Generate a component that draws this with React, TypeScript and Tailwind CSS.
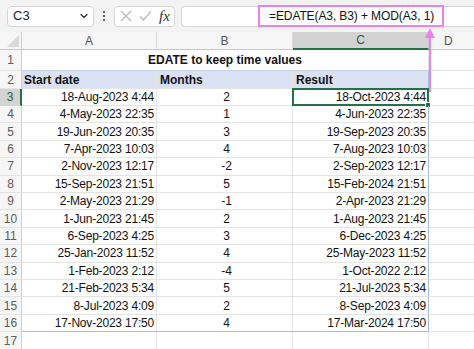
import { ChevronDown } from "lucide-react";

const rows = [
  ["18-Aug-2023 4:44", "2", "18-Oct-2023 4:44"],
  ["4-May-2023 22:35", "1", "4-Jun-2023 22:35"],
  ["19-Jun-2023 20:35", "3", "19-Sep-2023 20:35"],
  ["7-Apr-2023 10:03", "4", "7-Aug-2023 10:03"],
  ["2-Nov-2023 12:17", "-2", "2-Sep-2023 12:17"],
  ["15-Sep-2023 21:51", "5", "15-Feb-2024 21:51"],
  ["2-May-2023 21:29", "-1", "2-Apr-2023 21:29"],
  ["1-Jun-2023 21:45", "2", "1-Aug-2023 21:45"],
  ["6-Sep-2023 4:25", "3", "6-Dec-2023 4:25"],
  ["25-Jan-2023 11:52", "4", "25-May-2023 11:52"],
  ["1-Feb-2023 2:12", "-4", "1-Oct-2022 2:12"],
  ["21-Feb-2023 5:34", "5", "21-Jul-2023 5:34"],
  ["8-Jul-2023 4:09", "2", "8-Sep-2023 4:09"],
  ["17-Nov-2023 17:50", "4", "17-Mar-2024 17:50"],
];

const font = { fontFamily: '"Liberation Sans", Arial, sans-serif' };

function RowHead({ n, active }: { n: string; active?: boolean }) {
  return (
    <div
      className={
        active
          ? "flex items-center justify-center bg-[#d3d3d3] border-r-2 border-r-[#217346] border-b border-b-[#d4d4d4] text-[#1f5f3a] text-[12px]"
          : "flex items-center justify-center bg-[#f6f6f6] border-r border-r-[#d0d0d0] border-b border-b-[#e4e4e4] text-[#5c5c5c] text-[12px]"
      }
    >
      {n}
    </div>
  );
}

export default function App() {
  return (
    <div className="relative w-[474px] h-[349px] overflow-hidden bg-white text-[#111]" style={font}>
      {/* formula bar */}
      <div className="flex items-center h-[32px] bg-[#f3f3f3] pl-[7px] gap-[6px]">
        <div className="flex items-center justify-between w-[87px] h-[21px] bg-white border border-[#d6d6d6] rounded-[4px] pl-[5px] pr-[3px] text-[13px] text-[#222]">
          <span>C3</span>
          <ChevronDown size={12} strokeWidth={2.6} className="text-[#333]" />
        </div>
        <svg width="6" height="14" viewBox="0 0 6 14" className="mx-[1px]">
          <circle cx="3" cy="3" r="1.1" fill="#444" />
          <circle cx="3" cy="7" r="1.1" fill="#444" />
          <circle cx="3" cy="11" r="1.1" fill="#444" />
        </svg>
        <div className="flex items-center gap-[7px] w-[61px] h-[21px] bg-white border border-[#d6d6d6] rounded-[4px] pl-[5px]">
          <svg width="12" height="12" viewBox="0 0 12 12">
            <path d="M1 1 L11 11 M11 1 L1 11" stroke="#b8b8b8" strokeWidth="1.2" fill="none" />
          </svg>
          <svg width="13" height="12" viewBox="0 0 13 12">
            <path d="M1 6.5 L4.5 10 L12 1.5" stroke="#b8b8b8" strokeWidth="1.2" fill="none" />
          </svg>
          <span className="italic text-[15px] text-[#333] leading-none" style={{ fontFamily: '"Liberation Serif", serif' }}>
            fx
          </span>
        </div>
        <div className="flex-1 h-[21px] bg-white border border-[#d6d6d6] rounded-l-[4px] border-r-0 flex items-center">
          <div className="ml-[76px] w-[186px] h-[22px] border-2 border-[#ec83ec] flex items-center pl-[9px] text-[12px] tracking-[-0.1px] text-[#111]">
            =EDATE(A3, B3) + MOD(A3, 1)
          </div>
        </div>
      </div>

      {/* sheet */}
      <div className="grid grid-cols-[22px_135px_136px_136px_1fr] grid-rows-[18px_21.3px_repeat(15,17.4px)]">
        {/* column headers */}
        <div className="relative bg-[#f6f6f6] border-r border-r-[#d0d0d0] border-b border-b-[#c8c8c8]">
          <div className="absolute right-[2px] bottom-[2px] w-0 h-0 border-l-[12px] border-l-transparent border-b-[12px] border-b-[#d9d9d9]" />
        </div>
        <div className="flex items-center justify-center bg-[#f6f6f6] border-r border-r-[#dcdcdc] border-b border-b-[#c8c8c8] text-[12px] text-[#555]">A</div>
        <div className="flex items-center justify-center bg-[#f6f6f6] border-r border-r-[#dcdcdc] border-b border-b-[#c8c8c8] text-[12px] text-[#555]">B</div>
        <div className="flex items-center justify-center bg-[#d3d3d3] border-r border-r-[#c8c8c8] border-b-2 border-b-[#217346] text-[12px] text-[#1f5f3a]">C</div>
        <div className="flex items-center pl-[15px] bg-[#f6f6f6] border-b border-b-[#c8c8c8] text-[12px] text-[#555]">D</div>

        {/* row 1 */}
        <RowHead n="1" />
        <div className="col-span-3 flex items-end justify-center pb-[1px] border-r border-r-[#e4e4e4] border-b border-b-[#c6d2ea] font-bold text-[12px]">
          EDATE to keep time values
        </div>
        <div className="border-b border-b-[#e4e4e4]" />

        {/* row 2 */}
        <RowHead n="2" />
        <div className="flex items-center pl-[2px] bg-[#d9e1f2] border-r border-r-[#e4e4e4] border-b border-b-[#e4e4e4] font-bold text-[12px]">Start date</div>
        <div className="flex items-center pl-[3px] bg-[#d9e1f2] border-r border-r-[#e4e4e4] border-b border-b-[#e4e4e4] font-bold text-[12px]">Months</div>
        <div className="flex items-center pl-[3px] bg-[#d9e1f2] border-r border-r-[#a7bbdd] border-b border-b-[#e4e4e4] font-bold text-[12px]">Result</div>
        <div className="border-b border-b-[#e4e4e4]" />

        {/* data rows */}
        {rows.map((r, i) => {
          const last = i === rows.length - 1;
          const bottom = last ? "border-b border-b-[#a7bbdd]" : "border-b border-b-[#e4e4e4]";
          return [
            <RowHead key={`h${i}`} n={String(i + 3)} active={i === 0} />,
            <div key={`a${i}`} className={`flex items-center justify-end pr-[2px] border-r border-r-[#e4e4e4] ${bottom} text-[12px] tracking-[-0.2px]`}>
              {r[0]}
            </div>,
            <div key={`b${i}`} className={`flex items-center justify-center pl-[4px] border-r border-r-[#e4e4e4] ${bottom} text-[12px]`}>
              {r[1]}
            </div>,
            <div
              key={`c${i}`}
              className={`relative flex items-center justify-end pr-[2px] border-r border-r-[#a7bbdd] ${bottom} text-[12px] tracking-[-0.2px]`}
            >
              {r[2]}
              {i === 0 && (
                <div className="absolute -left-[1px] -top-[1px] -right-[1px] -bottom-[1px] border-2 border-[#217346]">
                  <div className="absolute -right-[4px] -bottom-[4px] w-[6px] h-[6px] bg-[#217346] border border-white" />
                </div>
              )}
            </div>,
            <div key={`d${i}`} className="border-b border-b-[#e4e4e4]" />,
          ];
        })}

        {/* row 17 */}
        <RowHead n="17" />
        <div className="border-r border-r-[#e4e4e4] border-b border-b-[#e4e4e4]" />
        <div className="border-r border-r-[#e4e4e4] border-b border-b-[#e4e4e4]" />
        <div className="border-r border-r-[#e4e4e4] border-b border-b-[#e4e4e4]" />
        <div className="border-b border-b-[#e4e4e4]" />
      </div>

      {/* pink arrow pointing to the formula */}
      <svg className="absolute left-[423px] top-[26px]" width="14" height="66" viewBox="0 0 14 66">
        <path d="M7 2 L12 12 L2 12 Z" fill="#ec83ec" />
        <line x1="7" y1="11" x2="7" y2="66" stroke="#ec83ec" strokeWidth="2" />
      </svg>
    </div>
  );
}
